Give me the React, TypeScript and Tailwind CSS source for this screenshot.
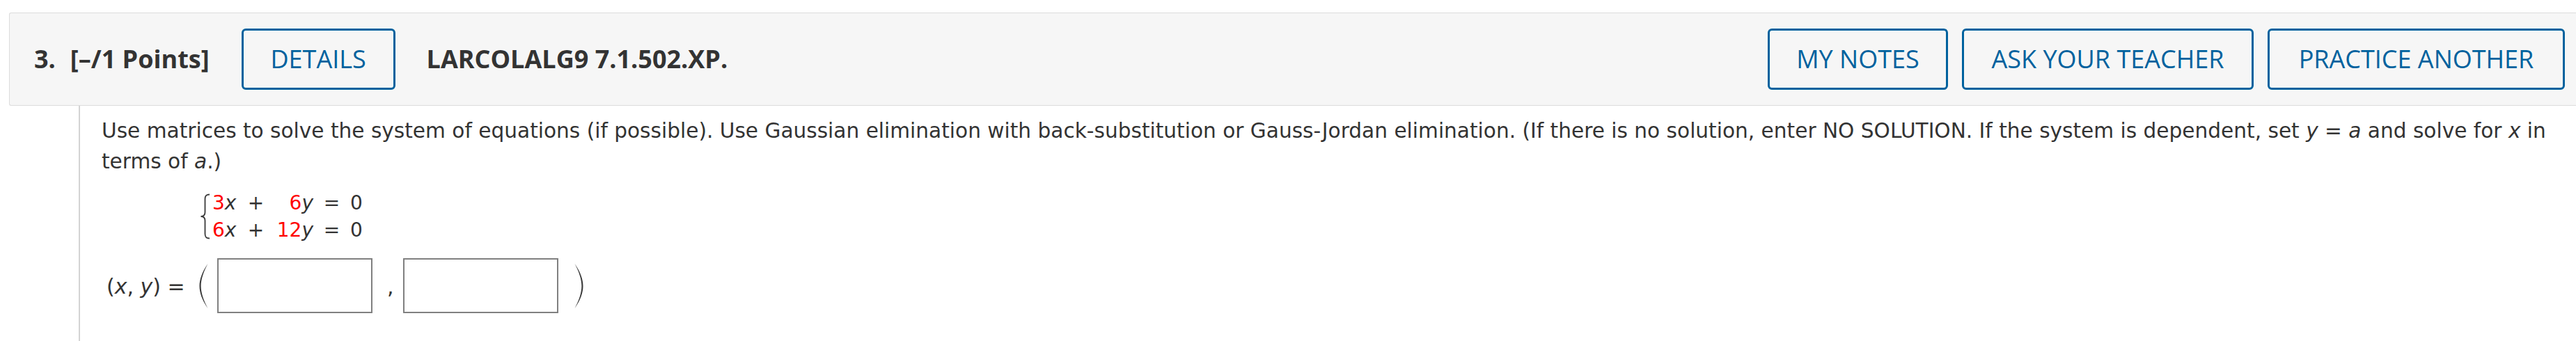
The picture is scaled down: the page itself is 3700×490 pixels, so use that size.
import React from 'react';

const blue = 'border-[#00629e] text-[#00629e]';

function HeaderButton({ label, width }: { label: string; width: string }) {
  return (
    <div
      className={`${width} h-[88px] shrink-0 flex items-center justify-center rounded-[6px] border-[3px] ${blue} bg-[#f6f6f6]`}
    >
      {label}
    </div>
  );
}

function Brace() {
  return (
    <svg width="17" height="66" viewBox="0 0 17 66" className="shrink-0">
      <path
        d="M15 1.5 C10 1.5 8.5 3.5 8.5 8 L8.5 27 C8.5 31 6.5 33 2.5 33 C6.5 33 8.5 35 8.5 39 L8.5 58 C8.5 62.5 10 64.5 15 64.5"
        stroke="#3a3a3a"
        strokeWidth="1.8"
        fill="none"
      />
    </svg>
  );
}

// stretched parenthesis around the answer boxes
function BigParen({ flip }: { flip?: boolean }) {
  return (
    <svg width="15" height="66" viewBox="0 0 15 66" className={`shrink-0 ${flip ? '-scale-x-100' : ''}`}>
      <path
        d="M13.5 1 C5 13 1.5 24 1.5 33 C1.5 42 5 53 13.5 65 C7 53 3.6 42 3.6 33 C3.6 24 7 13 13.5 1 Z"
        fill="#3a3a3a"
      />
    </svg>
  );
}

function AnswerBox() {
  return <div className="w-[223px] h-[79px] shrink-0 border-2 border-[#808080] bg-white" />;
}

const red = 'text-[#ff0000]';

export default function App() {
  return (
    <div className="w-[3700px] h-[490px] bg-white text-[#333] font-['DejaVu_Sans',sans-serif] overflow-hidden">
      {/* question header bar */}
      <div className="ml-[13px] mt-[18px] h-[134px] flex items-center border border-r-0 border-[#dcdcdc] rounded-l-[3px] bg-[#f6f6f6] pl-[35px] pr-[16px] font-['Open_Sans',sans-serif] text-[36px]">
        <span className="font-bold text-[#333]">3.</span>
        <span className="font-bold text-[#333] ml-[21px]">[–/1 Points]</span>
        <div className="ml-[46px]">
          <HeaderButton label="DETAILS" width="w-[221px]" />
        </div>
        <span className="font-bold text-[#333] ml-[45px]">LARCOLALG9 7.1.502.XP.</span>
        <div className="ml-auto flex gap-[20px]">
          <HeaderButton label="MY NOTES" width="w-[259px]" />
          <HeaderButton label="ASK YOUR TEACHER" width="w-[419px]" />
          <HeaderButton label="PRACTICE ANOTHER" width="w-[427px]" />
        </div>
      </div>

      {/* question body */}
      <div className="ml-[113px] h-[338px] border-l-2 border-[#d4d4d4] pl-[31px] pt-[14px]">
        <p className="text-[29.6px] leading-[44px] whitespace-nowrap">
          Use matrices to solve the system of equations (if possible). Use Gaussian elimination with
          back-substitution or Gauss-Jordan elimination. (If there is no solution, enter NO SOLUTION. If the
          system is dependent, set <i>y</i> = <i>a</i> and solve for <i>x</i> in
          <br />
          terms of <i>a</i>.)
        </p>

        <div className="mt-[18px] ml-[140px] flex items-center">
          <Brace />
          <div className="ml-[2px] text-[28px]">
            <div className="h-[39px] leading-[39px] flex">
              <span className="w-[45px]"><span className={red}>3</span><i>x</i></span>
              <span className="w-[35px] text-center">+</span>
              <span className="w-[65px] text-right"><span className={red}>6</span><i>y</i></span>
              <span className="w-[53px] text-center">=</span>
              <span>0</span>
            </div>
            <div className="h-[39px] leading-[39px] flex">
              <span className="w-[45px]"><span className={red}>6</span><i>x</i></span>
              <span className="w-[35px] text-center">+</span>
              <span className="w-[65px] text-right"><span className={red}>12</span><i>y</i></span>
              <span className="w-[53px] text-center">=</span>
              <span>0</span>
            </div>
          </div>
        </div>

        <div className="mt-[21px] flex items-center text-[30px] leading-[44px]">
          <span className="ml-[7px] w-[132px] shrink-0 pt-[3px] whitespace-nowrap">(<i>x</i>, <i>y</i>) =</span>
          <BigParen />
          <div className="ml-[12px]"><AnswerBox /></div>
          <span className="w-[43.5px] shrink-0 pl-[21px] pt-[3px]">,</span>
          <AnswerBox />
          <div className="ml-[22px]"><BigParen flip /></div>
        </div>
      </div>
    </div>
  );
}
